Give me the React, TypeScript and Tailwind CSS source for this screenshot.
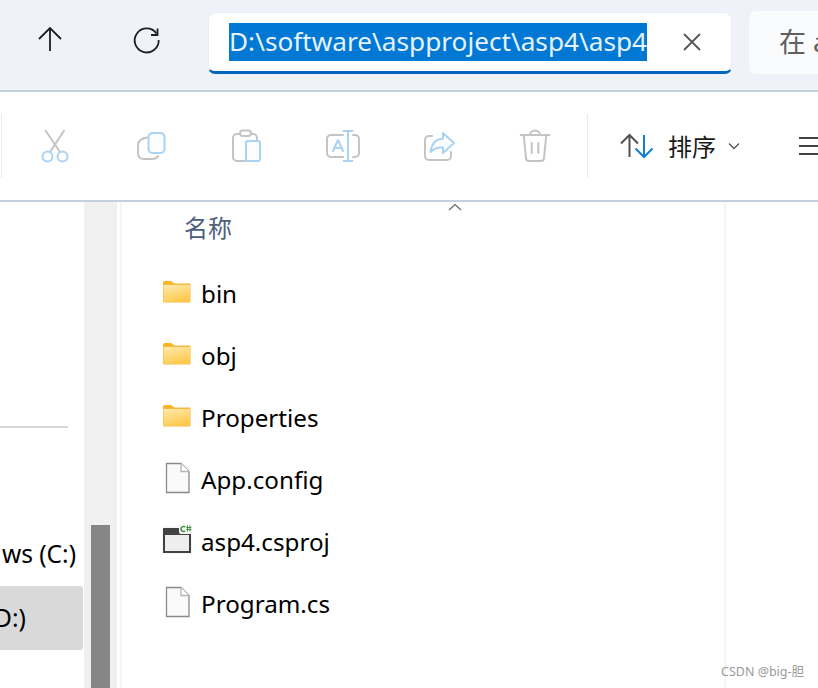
import React from 'react';

const BLUE = '#a9d2f3';
const GREY = '#c4c4c4';

const ToolIcon = ({ children }: { children: React.ReactNode }) => (
  <div className="w-[96px] flex items-center justify-center">
    <svg width="48" height="48" viewBox="0 0 48 48" fill="none" strokeWidth="2" strokeLinecap="round" strokeLinejoin="round">
      {children}
    </svg>
  </div>
);

const FolderIcon = () => (
  <svg width="30" height="24" viewBox="0 0 30 24" fill="none">
    <defs>
      <linearGradient id="folderFill" x1="0" y1="0" x2="0.4" y2="1">
        <stop offset="0" stopColor="#ffeaae" />
        <stop offset="1" stopColor="#fdca50" />
      </linearGradient>
    </defs>
    <path d="M1 3a2 2 0 0 1 2-2h6l4 3H1z" fill="#fbb518" />
    <rect x="1" y="3.500" width="27.500" height="19" rx="1" fill="#f3b93c" />
    <rect x="1.500" y="5" width="26.500" height="17" fill="url(#folderFill)" />
  </svg>
);

const FileIcon = () => (
  <svg width="30" height="32" viewBox="0 0 30 32" fill="none">
    <path d="M4.500 1.500H19L27 9.500V30.500H4.500Z" fill="#fafafa" stroke="#8a8a8a" strokeWidth="1.300" />
    <path d="M19 1.500V9.500H27" fill="#fff" stroke="#b5b5b5" strokeWidth="1.300" />
  </svg>
);

const CsprojIcon = () => (
  <svg width="30" height="32" viewBox="0 0 30 32" fill="none">
    <rect x="0" y="2" width="30" height="28" fill="#f7f7f7" />
    <rect x="2" y="5" width="26" height="23" fill="#eeeef0" stroke="#424242" strokeWidth="2" />
    <rect x="2" y="4" width="26" height="7" fill="#424242" />
    <rect x="17" y="0" width="13" height="10" rx="2" fill="#f5f8f5" />
    <path d="M23 3.200c-.8-1.200-4-1-4 1.800s3.200 3 4 1.800" stroke="#388a34" strokeWidth="1.500" />
    <path d="M25.500 1.500v6M28 1.500v6M24.300 3.500h5M24.300 5.500h5" stroke="#388a34" strokeWidth="0.900" />
  </svg>
);

const files = [
  { name: 'bin', icon: <FolderIcon /> },
  { name: 'obj', icon: <FolderIcon /> },
  { name: 'Properties', icon: <FolderIcon /> },
  { name: 'App.config', icon: <FileIcon /> },
  { name: 'asp4.csproj', icon: <CsprojIcon /> },
  { name: 'Program.cs', icon: <FileIcon /> },
];

export default function App() {
  return (
    <div className="relative w-[818px] h-[688px] overflow-hidden bg-white text-black flex flex-col font-['Noto_Sans','Noto_Sans_CJK_SC',sans-serif]">
      {/* address bar */}
      <div className="h-[92px] shrink-0 bg-[#eff3f9] border-b-2 border-[#c3d0dd] flex items-start pt-[12px]">
        <div className="ml-[26px] w-[48px] h-[62px] shrink-0 flex items-center justify-center">
          <svg width="48" height="48" viewBox="0 0 48 48" fill="none" stroke="#1f1f1f" strokeWidth="1.800">
            <path d="M24 43V20M13 31L24 20L35 31" transform="translate(0 -11)" />
          </svg>
        </div>
        <div className="ml-[49px] w-[48px] h-[62px] shrink-0 flex items-center justify-center">
          <svg width="48" height="48" viewBox="0 0 48 48" fill="none" stroke="#1f1f1f" strokeWidth="1.800">
            <path d="M33.500 14.500A12 12 0 1 0 35.700 21" />
            <path d="M34.500 9.500V16H28" />
          </svg>
        </div>
        <div className="ml-[37px] w-[524px] h-[62px] shrink-0 bg-white rounded-[7px] border border-[#e9edf3] border-b-[3px] border-b-[#0067c0] flex items-center justify-between pl-[20px] pr-[29px]">
          <span className="h-[38px] pb-[1px] flex items-center bg-[#0078d4] text-[#e6f2fc] text-[26.200px] leading-none whitespace-nowrap">D:\software\aspproject\asp4\asp4</span>
          <svg className="shrink-0" width="20" height="20" viewBox="0 0 20 20" fill="none" stroke="#555" strokeWidth="1.800">
            <path d="M2 2L18 18M18 2L2 18" />
          </svg>
        </div>
        <div className="ml-[17px] w-[100px] h-[63px] shrink-0 -mt-[1px] bg-[#f9fbfd] rounded-l-[7px] pl-[30px] flex items-center text-[#5f5f5f] text-[27px] whitespace-nowrap overflow-hidden">在 a</div>
      </div>

      {/* command bar */}
      <div className="h-[110px] shrink-0 bg-white border-b-2 border-[#c3d0dd] flex items-center">
        <div className="ml-[1px] w-[2px] h-[64px] bg-[#eaeaea]" />
        <div className="ml-[5px] flex">
          <ToolIcon>
            <path d="M14.700 8.700L29 30M33 8.700L19 30" stroke={GREY} />
            <circle cx="16.500" cy="34.500" r="5" stroke={BLUE} />
            <circle cx="31.500" cy="34.500" r="5" stroke={BLUE} />
          </ToolIcon>
          <ToolIcon>
            <path d="M20 15.500C13.500 16.500 11 19 11 23V31C11 35 13 37 17 37H25C28 37 30 36 31 34" stroke={GREY} />
            <rect x="21.500" y="11" width="16" height="20" rx="4" stroke={BLUE} fill="#fafcfe" />
          </ToolIcon>
          <ToolIcon>
            <path d="M17 12H14a4 4 0 0 0-4 4v19a4 4 0 0 0 4 4h8M28 12h2a4 4 0 0 1 4 4v2" stroke={GREY} />
            <rect x="17" y="8.500" width="11" height="5.500" rx="2.700" stroke={GREY} />
            <rect x="23" y="19" width="14" height="20" rx="2" stroke={BLUE} fill="#fafcfe" />
          </ToolIcon>
          <ToolIcon>
            <path d="M24 13H12a4 4 0 0 0-4 4v14a4 4 0 0 0 4 4h12M34 13h2a4 4 0 0 1 4 4v14a4 4 0 0 1-4 4h-2" stroke={GREY} />
            <path d="M29 9V39M24.500 9H33.500M24.500 39H33.500" stroke={BLUE} />
            <path d="M14 29L19 18L24 29M15.500 26H22.500" stroke={BLUE} />
          </ToolIcon>
          <ToolIcon>
            <path d="M17 14H14a4 4 0 0 0-4 4v16a4 4 0 0 0 4 4h18a4 4 0 0 0 4-4v-4" stroke={GREY} />
            <path d="M28 11L39 21L28 31V25.500C22 25 18.500 27 15.500 30C16.500 22 21 17 28 16.500Z" stroke={BLUE} fill="#fafcfe" />
          </ToolIcon>
          <ToolIcon>
            <path d="M9.700 13H38.300M12.700 13L15 36a3 3 0 0 0 3 3H30a3 3 0 0 0 3-3L35.300 13M19 13a5 4.500 0 0 1 10 0M20.700 21V31M27.300 21V31" stroke={GREY} />
          </ToolIcon>
        </div>
        <div className="ml-[4px] w-[2px] h-[64px] bg-[#eaeaea]" />
        <svg className="ml-[32px] shrink-0" width="36" height="28" viewBox="0 0 36 28" fill="none" strokeWidth="2">
          <path d="M10.500 25V3M2 11.500L10.500 3L19 11.500" stroke="#505050" />
          <path d="M25 3V25M16.500 16.500L25 25L33.500 16.500" stroke="#0f7fd8" />
        </svg>
        <span className="ml-[13px] pt-[2px] text-[24px] leading-none text-[#1a1a1a] whitespace-nowrap">排序</span>
        <svg className="ml-[12px] shrink-0" width="12" height="8" viewBox="0 0 12 8" fill="none" stroke="#555" strokeWidth="1.300">
          <path d="M1 1.500L6 6.500L11 1.500" />
        </svg>
        <svg className="ml-[58px] shrink-0" width="20" height="20" viewBox="0 0 20 20" fill="none" stroke="#444" strokeWidth="2">
          <path d="M1 2H20M1 10H20M1 18H20" />
        </svg>
      </div>

      {/* body */}
      <div className="relative flex-1 flex min-h-0">
        {/* nav pane */}
        <div className="w-[84px] shrink-0 flex flex-col pt-[224px] overflow-hidden">
          <div className="w-[68px] h-[2px] bg-[#d6d6d6]" />
          <div className="mt-[106px] h-[40px] flex items-center justify-end pr-[8px] text-[24.500px] whitespace-nowrap">ws (C:)</div>
          <div className="mt-[12px] w-[83px] h-[64px] bg-[#d9d9d9] rounded-r-[3px] flex items-center text-[24.500px] whitespace-nowrap overflow-hidden">
            <span className="-ml-[6px]">D:)</span>
          </div>
        </div>
        <div className="w-[33px] shrink-0 bg-[#f0f0f0] pl-[7px] pt-[323px] flex">
          <div className="w-[19px] h-full bg-[#868686]" />
        </div>

        {/* file list */}
        <div className="ml-[3px] w-[606px] shrink-0 border-l-2 border-r-2 border-[#f5f5f5]">
          <div className="h-[61px] pl-[62px] flex items-center text-[24px] text-[#4c607a] pb-[10px]">名称</div>
          {files.map((f) => (
            <div key={f.name} className="h-[62px] flex items-center pl-[40px]">
              <div className="w-[39px] shrink-0 flex mb-[4px]">{f.icon}</div>
              <span className="text-[24.200px] leading-none whitespace-nowrap">{f.name}</span>
            </div>
          ))}
        </div>

        <svg className="absolute left-[447px] top-[1px]" width="16" height="8" viewBox="0 0 16 8" fill="none" stroke="#666" strokeWidth="1.200">
          <path d="M2 7L8 1.500L14 7" />
        </svg>
        <span className="absolute left-[721px] top-[464px] text-[12.500px] leading-none text-[#9a9a9a] whitespace-nowrap">CSDN @big-胆</span>
      </div>
    </div>
  );
}
